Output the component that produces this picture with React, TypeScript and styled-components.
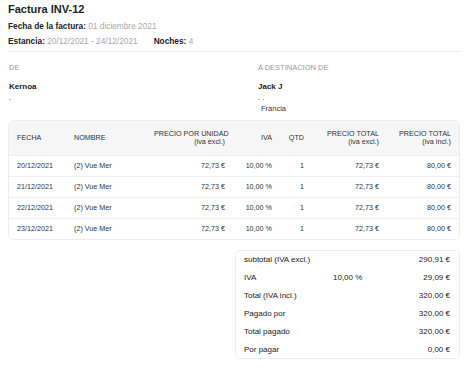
import styled, { createGlobalStyle } from 'styled-components';

const GlobalStyle = createGlobalStyle`
  body {
    margin: 0;
    background: #fff;
    font-family: "Liberation Sans", Arial, sans-serif;
    color: #222;
  }
`;

const Page = styled.div`
  width: 452px;
  padding: 3px 0 0 8px;
`;

const Title = styled.h1`
  margin: 0;
  font-size: 11px;
  line-height: 13px;
  font-weight: bold;
  color: #1e1e1e;
`;

const MetaLine = styled.div`
  display: flex;
  gap: 16px;
  font-size: 8.3px;
  line-height: 15px;
  &:first-of-type {
    margin-top: 3px;
  }
`;

const MetaItem = styled.span`
  color: #aaa;
  b {
    color: #222;
  }
`;

const Separator = styled.hr`
  margin: 2px 0 0;
  border: none;
  border-top: 1px solid #ececec;
`;

const Parties = styled.div`
  display: grid;
  grid-template-columns: 249px 1fr;
  margin-top: 11px;
`;

const Party = styled.div`
  display: flex;
  flex-direction: column;
`;

const PartyLabel = styled.div`
  font-size: 7.5px;
  line-height: 10px;
  color: #999;
  margin: 0 0 8px 1px;
`;

const PartyName = styled.div`
  font-size: 8px;
  line-height: 11px;
  font-weight: bold;
  margin-left: 1px;
`;

const PartyLine = styled.div<{ $indent?: number }>`
  font-size: 7.5px;
  line-height: 11px;
  color: #333;
  margin-left: ${p => p.$indent ?? 1}px;
  white-space: pre;
`;

const Table = styled.div`
  margin-top: 6px;
  border: 1px solid #ededed;
  border-radius: 6px;
  overflow: hidden;
  font-size: 7.2px;
  color: #333;
`;

const Row = styled.div<{ $head?: boolean }>`
  display: grid;
  grid-template-columns: 57px 80px 87px 47px 32px 75px 72px;
  align-items: center;
  height: ${p => (p.$head ? '34px' : '21px')};
  background: ${p => (p.$head ? '#f6f6f6' : '#fff')};
  border-top: ${p => (p.$head ? 'none' : '1px solid #eeeeee')};
  box-sizing: border-box;
`;

const Cell = styled.div<{ $right?: boolean }>`
  padding: 0 8px;
  text-align: ${p => (p.$right ? 'right' : 'left')};
  line-height: 8.4px;
  white-space: nowrap;
`;

const Totals = styled.div`
  margin: 10px 0 0 227px;
  border: 1px solid #ededed;
  border-radius: 5px;
  padding: 0 9px 0 8px;
  font-size: 8px;
  color: #222;
`;

const TotalRow = styled.div`
  display: grid;
  grid-template-columns: 89px 1fr 60px;
  align-items: center;
  height: 17.9px;
`;

const Amount = styled.span`
  text-align: right;
`;

const lines = ['20/12/2021', '21/12/2021', '22/12/2021', '23/12/2021'];

const totals = [
  { label: 'subtotal (IVA excl.)', mid: '', value: '290,91 €' },
  { label: 'IVA', mid: '10,00 %', value: '29,09 €' },
  { label: 'Total (IVA incl.)', mid: '', value: '320,00 €' },
  { label: 'Pagado por', mid: '', value: '320,00 €' },
  { label: 'Total pagado', mid: '', value: '320,00 €' },
  { label: 'Por pagar', mid: '', value: '0,00 €' },
];

export default function App() {
  return (
    <Page>
      <GlobalStyle />
      <Title>Factura INV-12</Title>
      <MetaLine>
        <MetaItem><b>Fecha de la factura:</b> 01 diciembre 2021</MetaItem>
      </MetaLine>
      <MetaLine>
        <MetaItem><b>Estancia:</b> 20/12/2021 - 24/12/2021</MetaItem>
        <MetaItem><b>Noches:</b> 4</MetaItem>
      </MetaLine>
      <Separator />

      <Parties>
        <Party>
          <PartyLabel>DE</PartyLabel>
          <PartyName>Kernoa</PartyName>
          <PartyLine>.</PartyLine>
        </Party>
        <Party>
          <PartyLabel>A DESTINACION DE</PartyLabel>
          <PartyName>Jack J</PartyName>
          <PartyLine>. .</PartyLine>
          <PartyLine $indent={4}>Francia</PartyLine>
        </Party>
      </Parties>

      <Table>
        <Row $head>
          <Cell>FECHA</Cell>
          <Cell>NOMBRE</Cell>
          <Cell $right>PRECIO POR UNIDAD<br />(iva excl.)</Cell>
          <Cell $right>IVA</Cell>
          <Cell $right>QTD</Cell>
          <Cell $right>PRECIO TOTAL<br />(iva excl.)</Cell>
          <Cell $right>PRECIO TOTAL<br />(iva incl.)</Cell>
        </Row>
        {lines.map(d => (
          <Row key={d}>
            <Cell>{d}</Cell>
            <Cell>(2) Vue Mer</Cell>
            <Cell $right>72,73 €</Cell>
            <Cell $right>10,00 %</Cell>
            <Cell $right>1</Cell>
            <Cell $right>72,73 €</Cell>
            <Cell $right>80,00 €</Cell>
          </Row>
        ))}
      </Table>

      <Totals>
        {totals.map(t => (
          <TotalRow key={t.label}>
            <span>{t.label}</span>
            <span>{t.mid}</span>
            <Amount>{t.value}</Amount>
          </TotalRow>
        ))}
      </Totals>
    </Page>
  );
}
